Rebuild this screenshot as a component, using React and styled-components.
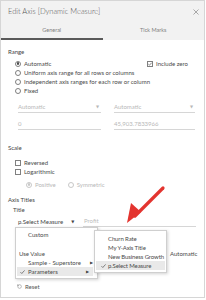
import styled, { createGlobalStyle } from 'styled-components';
import { RotateCcw } from 'lucide-react';

const GlobalStyle = createGlobalStyle`
  html, body { margin: 0; padding: 0; background: #fff; }
  body { font-family: Lato, 'Liberation Sans', sans-serif; }
`;

const Dialog = styled.div`
  position: relative;
  box-sizing: border-box;
  width: 205px;
  height: 298px;
  border: 1px solid #d6d6d6;
  background: #fff;
  overflow: hidden;
  color: #4a4a4a;
  font-size: 6px;
  white-space: nowrap;
`;

const Header = styled.div`
  background: #f2f2f2;
`;

const TitleBar = styled.div`
  height: 21px;
  display: flex;
  align-items: center;
  justify-content: space-between;
  padding: 0 5px 0 7px;
  font-size: 7.5px;
  font-weight: 300;
  color: #555;
`;

const Tabs = styled.div`
  display: grid;
  grid-template-columns: 1fr 1fr;
`;

const Tab = styled.div`
  height: 16px;
  line-height: 16px;
  text-align: center;
  font-size: 5.5px;
  color: #808080;
  border-bottom: 2px solid ${(p) => (p.$active ? '#5a5a5a' : 'transparent')};
`;

const Body = styled.div`
  padding: 0 8px 0 7px;
`;

const SectionLabel = styled.div`
  margin-top: ${(p) => p.$mt || 0}px;
  height: 10px;
  line-height: 10px;
  padding-left: ${(p) => p.$indent || 0}px;
  color: #444;
`;

const OptionRow = styled.div`
  display: flex;
  align-items: center;
  justify-content: ${(p) => (p.$start ? 'flex-start' : 'space-between')};
  height: 9px;
  margin-top: ${(p) => p.$mt || 0}px;
  padding-left: ${(p) => p.$indent || 7}px;
  color: ${(p) => (p.$muted ? '#b8b8b8' : '#4a4a4a')};
`;

const Option = styled.span`
  display: inline-flex;
  align-items: center;
  gap: 3px;
  margin-right: ${(p) => p.$gap || 0}px;
`;

const Radio = styled.span`
  box-sizing: border-box;
  width: 6px;
  height: 6px;
  border-radius: 50%;
  border: 0.8px solid ${(p) => (p.$muted ? '#c8c8c8' : '#808080')};
  display: inline-flex;
  align-items: center;
  justify-content: center;
  &::after {
    content: '';
    width: 2.4px;
    height: 2.4px;
    border-radius: 50%;
    background: ${(p) => (p.$checked ? (p.$muted ? '#c8c8c8' : '#4a4a4a') : 'transparent')};
  }
`;

const Check = styled.span`
  box-sizing: border-box;
  width: 6px;
  height: 6px;
  border: 0.8px solid #808080;
  display: inline-flex;
  align-items: center;
  justify-content: center;
`;

const FieldRow = styled.div`
  display: grid;
  grid-template-columns: 83px 81px;
  column-gap: 13px;
  margin-top: ${(p) => p.$mt || 0}px;
  padding-left: 10px;
`;

const Field = styled.div`
  display: flex;
  justify-content: space-between;
  align-items: center;
  height: 11px;
  border-bottom: 1px solid #d6d6d6;
  color: #b8b8b8;
  padding-right: 2px;
`;

const Caret = styled.span`
  font-size: 4px;
  color: ${(p) => (p.$dark ? '#444' : '#b8b8b8')};
  font-family: 'DejaVu Sans', sans-serif;
`;

const TitleValueRow = styled.div`
  display: grid;
  grid-template-columns: 65px 113px;
  height: 11px;
  padding-left: 10px;
  align-items: center;
`;

const TitleSelect = styled.div`
  display: flex;
  align-items: center;
  gap: 8px;
  color: #444;
`;

const TitleInput = styled.div`
  height: 11px;
  line-height: 11px;
  color: #bcbcbc;
  border-bottom: 1px solid #d6d6d6;
  padding-left: 1px;
`;

const HiddenRow = styled.div`
  margin-top: ${(p) => p.$mt || 0}px;
  height: 10px;
  line-height: 10px;
  padding-left: 162px;
  color: #4a4a4a;
`;

const ResetRow = styled.div`
  margin-top: ${(p) => p.$mt || 0}px;
  height: 10px;
  display: flex;
  align-items: center;
  gap: 3px;
  padding-left: 9px;
  color: #555;
`;

const Menu = styled.div`
  position: absolute;
  left: ${(p) => p.$left}px;
  top: ${(p) => p.$top}px;
  width: ${(p) => p.$width}px;
  box-sizing: border-box;
  background: #fff;
  border: 1px solid #cfcfcf;
  box-shadow: 1px 1px 3px rgba(0, 0, 0, 0.18);
  padding: ${(p) => p.$pad || '2px 0'};
  color: #4a4a4a;
  letter-spacing: ${(p) => (p.$tight ? '-0.12px' : 'normal')};
`;

const MenuItem = styled.div`
  position: relative;
  height: 9px;
  line-height: 9px;
  padding-left: ${(p) => p.$indent || 11}px;
  margin: 0 ${(p) => p.$inset || 0}px ${(p) => p.$gapBelow || 0}px 1px;
  background: ${(p) => (p.$active ? '#e9e9e9' : 'transparent')};
`;

const Tick = styled.svg`
  position: absolute;
  left: ${(p) => p.$left || 3}px;
  top: 2.5px;
`;

const SubArrow = styled.span`
  position: absolute;
  right: ${(p) => p.$right || 4}px;
  top: 0;
  font-family: 'DejaVu Sans', sans-serif;
  font-size: 4px;
  color: #444;
`;

const Arrow = styled.svg`
  position: absolute;
  left: 119px;
  top: 179px;
  pointer-events: none;
`;

function CheckMark({ left }) {
  return (
    <Tick $left={left} width="5" height="4" viewBox="0 0 5 4">
      <path d="M0.4 2.1 L1.8 3.5 L4.6 0.4" fill="none" stroke="#555" strokeWidth="0.7" />
    </Tick>
  );
}

function App() {
  return (
    <>
      <GlobalStyle />
      <Dialog>
        <Header>
          <TitleBar>
            <span>Edit Axis [Dynamic Measure]</span>
            <svg width="6" height="6" viewBox="0 0 6 6">
              <path d="M0.5 0.5 L5.5 5.5 M5.5 0.5 L0.5 5.5" stroke="#888" strokeWidth="0.7" />
            </svg>
          </TitleBar>
          <Tabs>
            <Tab $active>General</Tab>
            <Tab>Tick Marks</Tab>
          </Tabs>
        </Header>

        <Body>
          <SectionLabel $mt={7}>Range</SectionLabel>
          <OptionRow $mt={2}>
            <Option><Radio $checked />Automatic</Option>
            <Option $gap={8}>
              <Check>
                <svg width="4" height="4" viewBox="0 0 5 4">
                  <path d="M0.4 2.1 L1.8 3.5 L4.6 0.4" fill="none" stroke="#444" strokeWidth="0.8" />
                </svg>
              </Check>
              Include zero
            </Option>
          </OptionRow>
          <OptionRow>
            <Option><Radio />Uniform axis range for all rows or columns</Option>
          </OptionRow>
          <OptionRow>
            <Option><Radio />Independent axis ranges for each row or column</Option>
          </OptionRow>
          <OptionRow>
            <Option><Radio />Fixed</Option>
          </OptionRow>

          <FieldRow $mt={6}>
            <Field>Automatic<Caret>▼</Caret></Field>
            <Field>Automatic<Caret>▼</Caret></Field>
          </FieldRow>
          <FieldRow $mt={5}>
            <Field>0</Field>
            <Field>45,903.7833966</Field>
          </FieldRow>

          <SectionLabel $mt={13}>Scale</SectionLabel>
          <OptionRow $mt={5}>
            <Option><Check />Reversed</Option>
          </OptionRow>
          <OptionRow>
            <Option><Check />Logarithmic</Option>
          </OptionRow>
          <OptionRow $mt={4} $indent={18} $muted $start>
            <Option $gap={12}><Radio $checked $muted />Positive</Option>
            <Option><Radio $muted />Symmetric</Option>
          </OptionRow>

          <SectionLabel $mt={6}>Axis Titles</SectionLabel>
          <SectionLabel $indent={5}>Title</SectionLabel>
          <TitleValueRow>
            <TitleSelect>p.Select Measure<Caret $dark>▼</Caret></TitleSelect>
            <TitleInput>Profit</TitleInput>
          </TitleValueRow>

          <HiddenRow $mt={23}>Automatic</HiddenRow>
          <ResetRow $mt={22}>
            <RotateCcw size={5} strokeWidth={2} color="#666" />
            Reset
          </ResetRow>
        </Body>

        <Menu $left={14} $top={226} $width={83} $pad="2px 0 2px">
          <MenuItem $gapBelow={10}>Custom</MenuItem>
          <MenuItem $indent={2}>Use Value</MenuItem>
          <MenuItem>Sample - Superstore<SubArrow>▶</SubArrow></MenuItem>
          <MenuItem $active $inset={4}>
            <CheckMark left={3} />
            Parameters
            <SubArrow $right={0}>▶</SubArrow>
          </MenuItem>
        </Menu>

        <Menu $left={93} $top={229} $width={73} $pad="3px 0 2px" $tight>
          <MenuItem $indent={12}>Churn Rate</MenuItem>
          <MenuItem $indent={12}>My Y-Axis Title</MenuItem>
          <MenuItem $indent={12}>New Business Growth</MenuItem>
          <MenuItem $indent={12} $active $inset={1}>
            <CheckMark left={5} />
            p.Select Measure
          </MenuItem>
        </Menu>

        <Arrow width="50" height="50" viewBox="0 0 50 50">
          <line x1="43" y1="8" x2="15" y2="36" stroke="#e3342f" strokeWidth="3.2" strokeLinecap="round" />
          <polygon points="7,43 21,32 11,23" fill="#e3342f" />
        </Arrow>
      </Dialog>
    </>
  );
}

export default App;
